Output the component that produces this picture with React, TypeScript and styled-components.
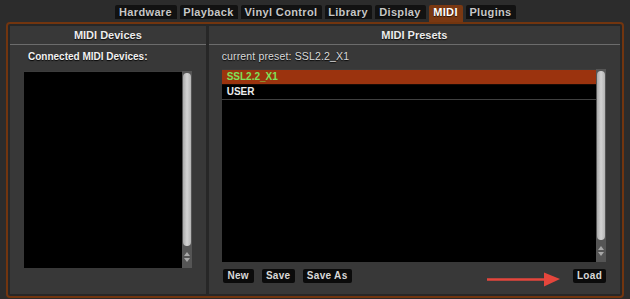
import styled, { createGlobalStyle } from 'styled-components'

const GlobalStyle = createGlobalStyle`
  html, body {
    margin: 0;
    padding: 0;
    background: #2c2c2c;
  }
  body {
    font-family: "Liberation Sans", Arial, sans-serif;
  }
`

const Page = styled.div`
  width: 630px;
  height: 299px;
  background: #2c2c2c;
  overflow: hidden;
`

const TabBar = styled.div`
  display: flex;
  justify-content: center;
  align-items: flex-start;
  gap: 3px;
  padding-top: 5px;
  height: 17px;
`

const Tab = styled.div<{ $width: number; $active?: boolean }>`
  width: ${p => p.$width}px;
  height: ${p => (p.$active ? 17 : 14)}px;
  line-height: 14px;
  text-align: center;
  font-size: 11px;
  font-weight: bold;
  letter-spacing: 0.35px;
  color: ${p => (p.$active ? '#ffffff' : '#c6c6c6')};
  background: ${p => (p.$active ? '#7a3812' : '#121212')};
  border-radius: 2px 2px 0 0;
  text-shadow: 0 1px 1px rgba(0, 0, 0, 0.7);
`

const Frame = styled.div`
  margin: 0 6px;
  height: 268px;
  border: 2px solid #72350f;
  border-radius: 4px;
  padding: 2px;
  display: flex;
  gap: 3px;
  background: #272727;
`

const Panel = styled.div<{ $width: number }>`
  width: ${p => p.$width}px;
  background: #383838;
  display: flex;
  flex-direction: column;
`

const PanelHeader = styled.div`
  height: 18px;
  line-height: 18px;
  text-align: center;
  font-size: 11px;
  font-weight: bold;
  color: #ececec;
  border-bottom: 1px solid #6c6c6c;
  text-shadow: 0 1px 1px rgba(0, 0, 0, 0.8);
`

const PanelBody = styled.div<{ $pad: string }>`
  padding: ${p => p.$pad};
  display: flex;
  flex-direction: column;
`

const Label = styled.div<{ $bold?: boolean; $indent?: number; $gap: number }>`
  height: 12px;
  line-height: 12px;
  font-size: ${p => (p.$bold ? 10 : 10.5)}px;
  font-weight: ${p => (p.$bold ? 'bold' : 'normal')};
  letter-spacing: ${p => (p.$bold ? 0 : 0.15)}px;
  color: ${p => (p.$bold ? '#f2f2f2' : '#dadada')};
  margin-left: ${p => p.$indent ?? 0}px;
  margin-bottom: ${p => p.$gap}px;
  text-shadow: 0 1px 1px rgba(0, 0, 0, 0.9);
  white-space: nowrap;
`

const ListArea = styled.div<{ $height: number }>`
  height: ${p => p.$height}px;
  display: flex;
`

const ListBox = styled.div`
  flex: 1;
  background: #000;
  border-top: 1px solid #3c3c3c;
  display: flex;
  flex-direction: column;
`

const Row = styled.div<{ $selected?: boolean }>`
  height: 14px;
  line-height: 14px;
  padding-left: 5px;
  font-size: 10px;
  font-weight: bold;
  color: ${p => (p.$selected ? '#7ee35a' : '#ededed')};
  background: ${p => (p.$selected ? '#9b330e' : '#000')};
  border-bottom: 1px solid ${p => (p.$selected ? '#1a0a04' : '#404040')};
`

const ScrollTrack = styled.div`
  width: 10px;
  background: #555555;
  display: flex;
  flex-direction: column;
  padding: 2px 1px 5px;
  box-sizing: border-box;
`

const ScrollThumb = styled.div`
  flex: 1;
  border-radius: 4px;
  background: linear-gradient(to right, #a9a9a9, #d2d2d2 50%, #b4b4b4);
`

const ScrollArrows = styled.svg`
  display: block;
  margin-top: 5px;
  width: 8px;
  height: 12px;
`

const ButtonRow = styled.div`
  display: flex;
  align-items: flex-start;
  gap: 8px;
  margin-top: 7px;
  padding-left: 1px;
`

const Button = styled.div<{ $width: number }>`
  width: ${p => p.$width}px;
  height: 14px;
  line-height: 14px;
  text-align: center;
  font-size: 10px;
  font-weight: bold;
  letter-spacing: 0.3px;
  color: #d8d8d8;
  background: #0b0b0b;
  border-radius: 2px;
`

const Arrow = styled.svg`
  margin-left: auto;
  margin-right: 4px;
  margin-top: 2px;
  width: 74px;
  height: 18px;
`

const Scrollbar = () => (
  <ScrollTrack>
    <ScrollThumb />
    <ScrollArrows viewBox="0 0 8 12">
      <polygon points="4,1 7,5 1,5" fill="#a8a8a8" />
      <polygon points="1,7 7,7 4,11" fill="#a8a8a8" />
    </ScrollArrows>
  </ScrollTrack>
)

const tabs = [
  { name: 'Hardware', width: 62 },
  { name: 'Playback', width: 58 },
  { name: 'Vinyl Control', width: 81 },
  { name: 'Library', width: 47 },
  { name: 'Display', width: 51 },
  { name: 'MIDI', width: 34, active: true },
  { name: 'Plugins', width: 50 },
]

export default function App() {
  return (
    <Page>
      <GlobalStyle />
      <TabBar>
        {tabs.map(t => (
          <Tab key={t.name} $width={t.width} $active={t.active}>
            {t.name}
          </Tab>
        ))}
      </TabBar>
      <Frame>
        <Panel $width={196}>
          <PanelHeader>MIDI Devices</PanelHeader>
          <PanelBody $pad="6px 14px 0 14px">
            <Label $bold $indent={4} $gap={8}>
              Connected MIDI Devices:
            </Label>
            <ListArea $height={197}>
              <ListBox />
              <Scrollbar />
            </ListArea>
          </PanelBody>
        </Panel>
        <Panel $width={412}>
          <PanelHeader>MIDI Presets</PanelHeader>
          <PanelBody $pad="5px 14px 0 13px">
            <Label $gap={7}>current preset: SSL2.2_X1</Label>
            <ListArea $height={193}>
              <ListBox>
                <Row $selected>SSL2.2_X1</Row>
                <Row>USER</Row>
              </ListBox>
              <Scrollbar />
            </ListArea>
            <ButtonRow>
              <Button $width={31}>New</Button>
              <Button $width={33}>Save</Button>
              <Button $width={49}>Save As</Button>
              <Arrow viewBox="0 0 74 18">
                <line x1="0" y1="8.5" x2="60" y2="8.5" stroke="#e5463c" strokeWidth="2.5" />
                <polygon points="57,1.5 73,8 57,15.5" fill="#e5463c" />
              </Arrow>
              <Button $width={33}>Load</Button>
            </ButtonRow>
          </PanelBody>
        </Panel>
      </Frame>
    </Page>
  )
}
